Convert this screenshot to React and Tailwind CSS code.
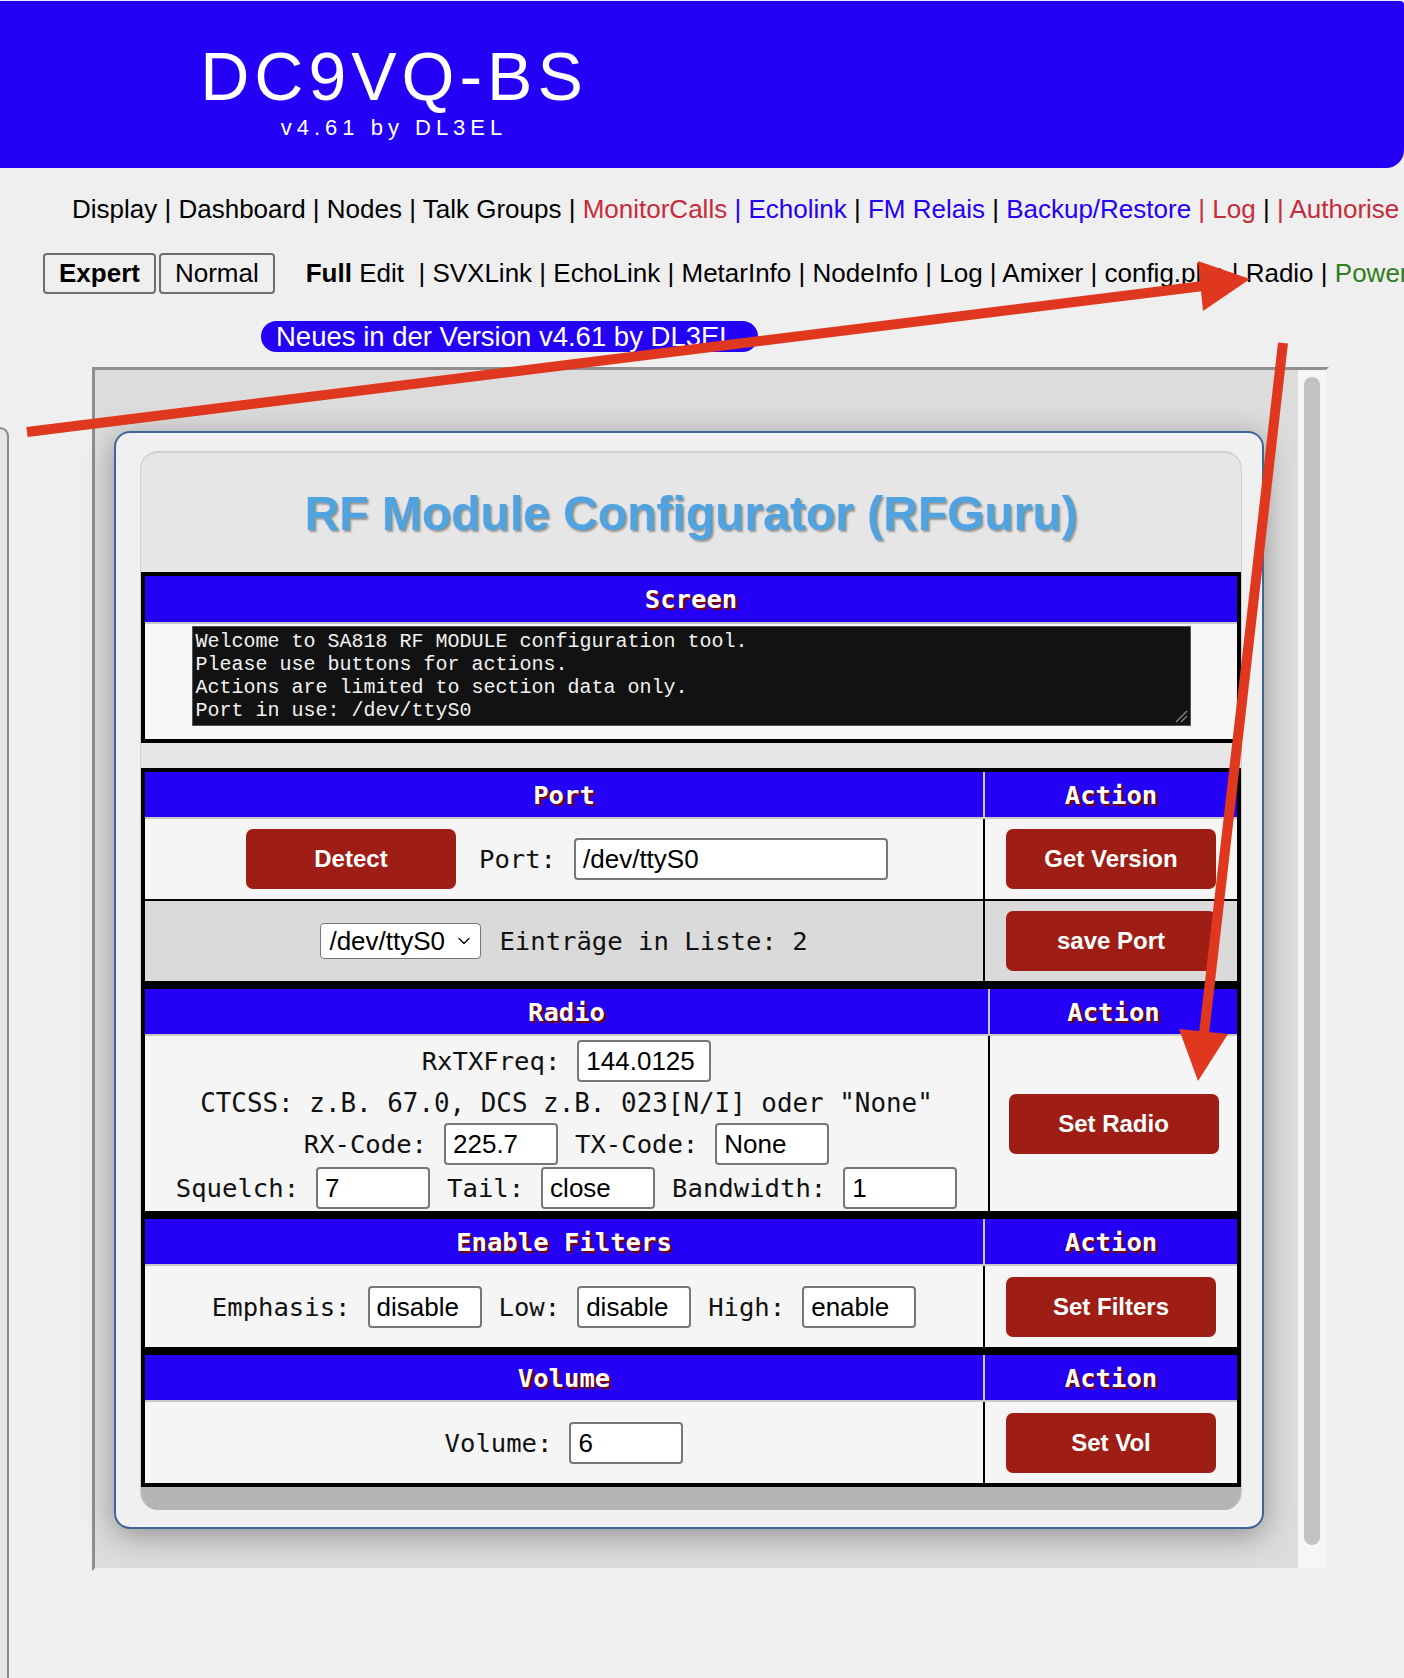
import React from "react";
import { ChevronDown } from "lucide-react";

const MONO = "font-['DejaVu_Sans_Mono',monospace]";

function Btn({ children, className = "" }) {
  return (
    <div
      className={
        "w-[210px] h-[60px] rounded-[7px] bg-[#9e1e16] text-white font-bold text-[24px] flex items-center justify-center shrink-0 " +
        className
      }
    >
      {children}
    </div>
  );
}

function Inp({ className = "", children }) {
  return (
    <div
      className={
        "h-[42px] border-2 border-[#777777] rounded-[4px] bg-white pl-[7px] text-[26px] leading-none flex items-center text-black shrink-0 " +
        className
      }
    >
      {children}
    </div>
  );
}

function Label({ className = "", children }) {
  return (
    <span className={MONO + " text-[25.6px] leading-[30px] text-[#111111] whitespace-pre shrink-0 " + className}>
      {children}
    </span>
  );
}

function HText({ children }) {
  return (
    <span
      className={
        MONO +
        " font-bold text-[25.6px] leading-[30px] text-white whitespace-pre [text-shadow:2px_2px_1px_#7a0000]"
      }
    >
      {children}
    </span>
  );
}

function Head({ left, right, rw }) {
  return (
    <div className="flex h-[47px] bg-[#2400f5] border-b-2 border-[#c8c8c8]">
      <div className="flex-1 flex items-center justify-center">
        <HText>{left}</HText>
      </div>
      <div className={"flex items-center justify-center border-l-2 border-[#c8c8c8] " + rw}>
        <HText>{right}</HText>
      </div>
    </div>
  );
}

export default function App() {
  return (
    <div className="relative w-[1404px] h-[1678px] overflow-hidden bg-[#efefef] flex flex-col font-['Liberation_Sans',Arial,sans-serif] text-black">
      {/* Header */}
      <div className="mt-[1px] h-[167px] shrink-0 bg-[#2400f5] rounded-br-[18px] rounded-tr-[4px] pt-[41px]">
        <div className="w-[788px] text-center text-white">
          <div className="text-[68px] leading-[68px] tracking-[5px]">DC9VQ-BS</div>
          <div className="mt-[7px] text-[22px] leading-[22px] tracking-[5px]">v4.61 by DL3EL</div>
        </div>
      </div>

      {/* Nav line 1 */}
      <div className="mt-[27px] pl-[72px] whitespace-nowrap text-[26px] leading-[29px] shrink-0">
        Display | Dashboard | Nodes | Talk Groups |{" "}
        <span className="text-[#c62b3b]">MonitorCalls</span>{" "}
        <span className="text-[#2400f5]">| Echolink</span> |{" "}
        <span className="text-[#2400f5]">FM Relais</span> |{" "}
        <span className="text-[#2400f5]">Backup/Restore</span>{" "}
        <span className="text-[#c62b3b]">| Log</span> |{" "}
        <span className="text-[#c62b3b]">| Authorise</span>
      </div>

      {/* Nav line 2 */}
      <div className="mt-[29px] pl-[43px] h-[41px] flex items-center whitespace-nowrap text-[26px] leading-[29px] shrink-0">
        <div className="h-[41px] border-2 border-[#6e6e6e] rounded-[4px] px-[14px] flex items-center font-bold bg-[#efefef]">
          Expert
        </div>
        <div className="ml-[3px] h-[41px] border-2 border-[#6e6e6e] rounded-[4px] px-[14px] flex items-center bg-[#efefef]">
          Normal
        </div>
        <div className="ml-[31px]">
          <b>Full</b> Edit&nbsp;&nbsp;| SVXLink | EchoLink | MetarInfo | NodeInfo | Log | Amixer | config.php | Radio |{" "}
          <span className="text-[#2f7d1b]">Power</span>
        </div>
      </div>

      {/* Pill */}
      <div className="mt-[27px] pl-[261px] shrink-0">
        <div className="w-[497px] h-[31px] rounded-full bg-[#2400f5] text-white text-[27.5px] leading-[31px] pl-[15px] whitespace-nowrap">
          Neues in der Version v4.61 by DL3EL
        </div>
      </div>

      {/* Main */}
      <div className="mt-[15px] flex flex-1">
        <div className="w-[9px] mt-[60px] bg-[#e6e6e6] border-r-2 border-t-2 border-[#8a8a8a] rounded-tr-[9px]" />
        <div className="ml-[83px] w-[1237px] h-[1204px] self-start border-[3px] border-t-[#8f8f8f] border-l-[#8f8f8f] border-r-[#efefef] border-b-[#efefef] flex">
          <div className="flex-1 bg-[#dcdcdc] pt-[61px] pl-[19px]">
            {/* Card */}
            <div className="w-[1150px] bg-[#f0f0f0] border-2 border-[#3d6596] rounded-[16px] pl-[24px] pr-[20px] pt-[18px] pb-[17px] shadow-[0_6px_30px_rgba(0,0,0,0.35)]">
              {/* Panel */}
              <div className="bg-[#e6e6e6] border-x border-t-2 border-[#d0d0d0] rounded-[18px] overflow-hidden">
                <div className="pt-[33px] pb-[31px] text-center">
                  <div className="text-[48px] leading-[55px] font-bold text-[#4ea3e0] [text-shadow:2px_2px_2px_rgba(0,0,0,0.35)] whitespace-nowrap">
                    RF Module Configurator (RFGuru)
                  </div>
                </div>

                {/* Screen */}
                <div className="border-4 border-black mb-[25px]">
                  <div className="h-[48px] bg-[#2400f5] border-b-2 border-[#c8c8c8] flex items-center justify-center">
                    <HText>Screen</HText>
                  </div>
                  <div className="bg-[#f7f7f7] pt-[2px] pb-[13px] flex justify-center">
                    <div className="relative">
                      <textarea
                        readOnly
                        className="block w-[999px] h-[100px] resize-none bg-[#121212] text-[#f2f2f2] border border-[#555555] font-['Liberation_Mono',monospace] text-[20px] leading-[23px] px-[3px] pt-[3px] outline-none"
                        defaultValue={
                          "Welcome to SA818 RF MODULE configuration tool.\nPlease use buttons for actions.\nActions are limited to section data only.\nPort in use: /dev/ttyS0"
                        }
                      />
                      <svg
                        className="absolute right-[3px] bottom-[3px]"
                        width="13"
                        height="13"
                        viewBox="0 0 13 13"
                      >
                        <line x1="1" y1="12" x2="12" y2="1" stroke="#8a8a8a" strokeWidth="1.3" />
                        <line x1="6" y1="12" x2="12" y2="6" stroke="#8a8a8a" strokeWidth="1.3" />
                      </svg>
                    </div>
                  </div>
                </div>

                {/* Port */}
                <div className="border-4 border-black">
                  <Head left="Port" right="Action" rw="w-[254px]" />
                  <div className="flex h-[80px] bg-[#f5f5f5]">
                    <div className="flex-1 flex items-center justify-center pl-[6px]">
                      <Btn>Detect</Btn>
                      <Label className="ml-[23px]">Port:</Label>
                      <Inp className="ml-[18px] w-[314px]">/dev/ttyS0</Inp>
                    </div>
                    <div className="w-[254px] border-l-2 border-black flex items-center justify-center">
                      <Btn>Get Version</Btn>
                    </div>
                  </div>
                  <div className="flex h-[82px] bg-[#dadada] border-t-2 border-black">
                    <div className="flex-1 flex items-center justify-center">
                      <div className="w-[161px] h-[36px] border-[1.5px] border-[#777777] rounded-[4px] bg-white flex items-center pl-[8px] pr-[6px] text-[26px] leading-none">
                        <span>/dev/ttyS0</span>
                        <ChevronDown className="ml-auto" size={20} strokeWidth={1.5} />
                      </div>
                      <Label className="ml-[18px]">Einträge in Liste: 2</Label>
                    </div>
                    <div className="w-[254px] border-l-2 border-black flex items-center justify-center">
                      <Btn>save Port</Btn>
                    </div>
                  </div>
                </div>

                {/* Radio */}
                <div className="border-4 border-black">
                  <Head left="Radio" right="Action" rw="w-[249px]" />
                  <div className="flex h-[175px] bg-[#f5f5f5]">
                    <div className="flex-1 flex flex-col items-center pt-[4px]">
                      <div className="flex items-center h-[42px] gap-[17px]">
                        <Label>RxTXFreq:</Label>
                        <Inp className="w-[134px]">144.0125</Inp>
                      </div>
                      <div className="flex items-center h-[41px]">
                        <Label className="text-[25.9px]">CTCSS: z.B. 67.0, DCS z.B. 023[N/I] oder "None"</Label>
                      </div>
                      <div className="flex items-center h-[42px] gap-[17px]">
                        <Label>RX-Code:</Label>
                        <Inp className="w-[114px]">225.7</Inp>
                        <Label>TX-Code:</Label>
                        <Inp className="w-[114px]">None</Inp>
                      </div>
                      <div className="flex items-center h-[42px] mt-[2px] gap-[17px]">
                        <Label>Squelch:</Label>
                        <Inp className="w-[114px]">7</Inp>
                        <Label>Tail:</Label>
                        <Inp className="w-[114px]">close</Inp>
                        <Label>Bandwidth:</Label>
                        <Inp className="w-[114px]">1</Inp>
                      </div>
                    </div>
                    <div className="w-[249px] border-l-2 border-black flex items-center justify-center">
                      <Btn>Set Radio</Btn>
                    </div>
                  </div>
                </div>

                {/* Enable Filters */}
                <div className="border-4 border-black">
                  <Head left="Enable Filters" right="Action" rw="w-[254px]" />
                  <div className="flex h-[81px] bg-[#f5f5f5]">
                    <div className="flex-1 flex items-center justify-center gap-[17px]">
                      <Label>Emphasis:</Label>
                      <Inp className="w-[114px]">disable</Inp>
                      <Label>Low:</Label>
                      <Inp className="w-[114px]">disable</Inp>
                      <Label>High:</Label>
                      <Inp className="w-[114px]">enable</Inp>
                    </div>
                    <div className="w-[254px] border-l-2 border-black flex items-center justify-center">
                      <Btn>Set Filters</Btn>
                    </div>
                  </div>
                </div>

                {/* Volume */}
                <div className="border-4 border-black">
                  <Head left="Volume" right="Action" rw="w-[254px]" />
                  <div className="flex h-[81px] bg-[#f5f5f5]">
                    <div className="flex-1 flex items-center justify-center gap-[17px]">
                      <Label>Volume:</Label>
                      <Inp className="w-[114px]">6</Inp>
                    </div>
                    <div className="w-[254px] border-l-2 border-black flex items-center justify-center">
                      <Btn>Set Vol</Btn>
                    </div>
                  </div>
                </div>

                <div className="h-[23px] bg-[#b5b5b5]" />
              </div>
            </div>
          </div>
          {/* Scrollbar */}
          <div className="w-[28px] bg-[#f6f6f6] pt-[7px] pl-[6px]">
            <div className="w-[16px] h-[1168px] rounded-full bg-[#c2c2c2]" />
          </div>
        </div>
      </div>

      {/* Annotation arrows */}
      <svg className="absolute left-0 top-0 pointer-events-none" width="1404" height="1678" viewBox="0 0 1404 1678">
        <line x1="27" y1="432" x2="1203" y2="286" stroke="#e0371f" strokeWidth="10" />
        <polygon points="1250,279 1198,261 1203,311" fill="#e0371f" />
        <line x1="1283" y1="343" x2="1204" y2="1034" stroke="#e0371f" strokeWidth="10" />
        <polygon points="1179,1029 1228,1034 1198,1081" fill="#e0371f" />
      </svg>
    </div>
  );
}
